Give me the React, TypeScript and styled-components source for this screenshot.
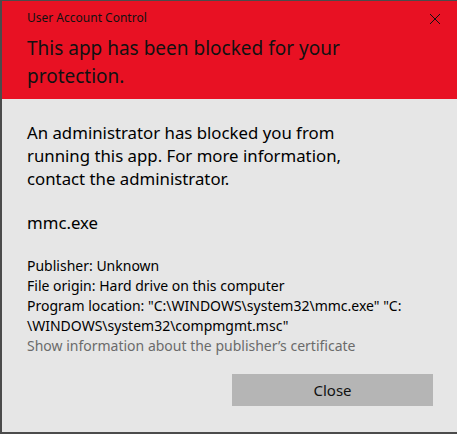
import React from "react";
import styled, { createGlobalStyle } from "styled-components";

const Global = createGlobalStyle`
  html, body { margin: 0; padding: 0; background: #ffffff; overflow: hidden; }
  body { font-family: "Noto Sans", "Open Sans", sans-serif; }
`;

const Window = styled.div`
  width: 470px;
  height: 431px;
  border-left: 2px solid #4b4b4b;
  border-top: 1px solid #4b4b4b;
  border-bottom: 2px solid #4b4b4b;
  background: #e6e6e6;
  display: flex;
  flex-direction: column;
`;

const Header = styled.div`
  background: #e81123;
  height: 98px;
  box-sizing: border-box;
  padding: 9px 0 0 25px;
  display: flex;
  flex-direction: column;
  position: relative;
`;

const Caption = styled.div`
  font-size: 12px;
  line-height: 16px;
  color: #111;
`;

const Title = styled.h1`
  margin: 8px 0 0;
  font-weight: 400;
  font-size: 19px;
  line-height: 28px;
  color: #111;
  width: 330px;
`;

const CloseX = styled.button`
  position: absolute;
  top: 10px;
  left: 425px;
  width: 16px;
  height: 16px;
  padding: 0;
  border: none;
  background: transparent;
  display: flex;
  align-items: center;
  justify-content: center;
`;

const Body = styled.div`
  padding: 22px 0 0 25px;
  display: flex;
  flex-direction: column;
`;

const Message = styled.p`
  margin: 0;
  font-size: 16.8px;
  line-height: 23px;
  color: #000;
  width: 340px;
`;

const AppName = styled.div`
  margin-top: 21px;
  font-size: 16.8px;
  line-height: 23px;
  color: #000;
`;

const Details = styled.div`
  margin-top: 22px;
  font-size: 14px;
  line-height: 20px;
  color: #000;
  width: 410px;
`;

const DetailLine = styled.div<{ $muted?: boolean }>`
  color: ${(p) => (p.$muted ? "#6b6b6b" : "#000")};
`;

const Footer = styled.div`
  display: flex;
  padding: 18px 0 0 230px;
`;

const Button = styled.button`
  width: 201px;
  height: 32px;
  background: #b5b5b5;
  border: none;
  font-family: inherit;
  font-size: 15px;
  color: #111;
`;

export default function App() {
  return (
    <>
      <Global />
      <Window>
        <Header>
          <Caption>User Account Control</Caption>
          <Title>This app has been blocked for your protection.</Title>
          <CloseX aria-label="Close">
            <svg width="12" height="12" viewBox="0 0 12 12">
              <path d="M1 1 L11 11 M11 1 L1 11" stroke="#111" strokeWidth="1" />
            </svg>
          </CloseX>
        </Header>
        <Body>
          <Message>
            An administrator has blocked you from running this app. For more
            information, contact the administrator.
          </Message>
          <AppName>mmc.exe</AppName>
          <Details>
            <DetailLine>Publisher: Unknown</DetailLine>
            <DetailLine>File origin: Hard drive on this computer</DetailLine>
            <DetailLine>
              Program location: "C:\WINDOWS\system32\mmc.exe" "C:
              <br />
              \WINDOWS\system32\compmgmt.msc"
            </DetailLine>
            <DetailLine $muted>Show information about the publisher’s certificate</DetailLine>
          </Details>
        </Body>
        <Footer>
          <Button>Close</Button>
        </Footer>
      </Window>
    </>
  );
}
